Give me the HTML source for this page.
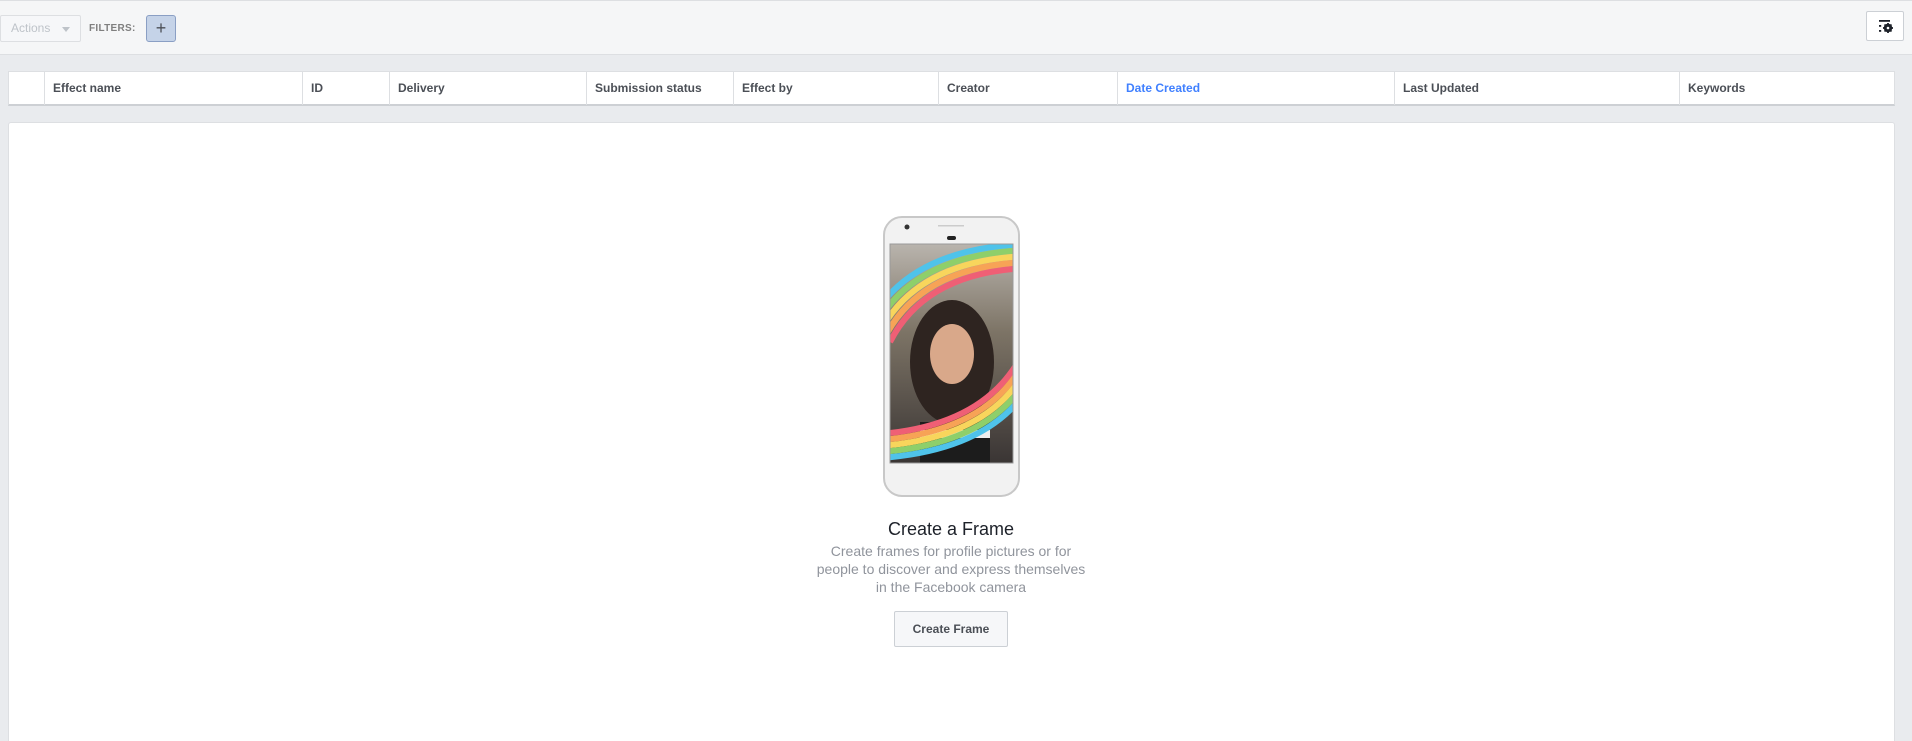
<!DOCTYPE html>
<html style="height:741px;overflow:hidden"><head><meta charset="utf-8"><style>
*{box-sizing:border-box;margin:0;padding:0}
body{width:1912px;height:741px;background:#e9ebee;font-family:"Liberation Sans",Helvetica,Arial,sans-serif;position:relative;overflow:hidden}
.top{position:absolute;left:0;top:0;width:1912px;height:55px;background:#f5f6f7;border-top:1px solid #dddfe2;border-bottom:1px solid #dddfe2}
.act{position:absolute;left:0;top:14px;width:81px;height:27px;border:1px solid #dddfe2;border-radius:2px;background:#f6f7f9;color:#bec3c9;font-size:12px;line-height:25px;padding-left:10px}
.act:after{content:"";position:absolute;left:61px;top:11px;border:4px solid transparent;border-top:5px solid #bec3c9}
.fl{position:absolute;left:89px;top:22px;font-size:10px;font-weight:bold;color:#7f7f7f;letter-spacing:.3px}
.plus{position:absolute;left:146px;top:14px;width:30px;height:27px;border:1px solid #8a9fc4;border-radius:3px;background:#c5d3e8;color:#4b4f56;font-size:18px;text-align:center;line-height:24px}
.set{position:absolute;left:1866px;top:10px;width:38px;height:30px;border:1px solid #ccd0d5;border-radius:2px;background:#fff}
.hdr{position:absolute;left:8px;top:71px;width:1887px;height:35px;background:#fff;border:1px solid #dddfe2;border-bottom:2px solid #cdd0d4}
.hdr div{position:absolute;top:0;height:33px;border-left:1px solid #dddfe2;font-size:12px;font-weight:bold;color:#4b4f56;line-height:33px;padding-left:8px}
.panel{position:absolute;left:8px;top:122px;width:1887px;height:625px;background:#fff;border:1px solid #dddfe2;border-radius:3px}
.t{position:absolute;left:0;width:1912px;text-align:center}
.btn{position:absolute;left:894px;top:611px;width:114px;height:36px;border:1px solid #ccd0d5;border-radius:2px;background:#f6f7f9;font-size:12px;font-weight:bold;color:#4b4f56;text-align:center;line-height:34px}
</style></head><body>
<div class="top">
<div class="act">Actions</div>
<div class="fl">FILTERS:</div>
<div class="plus">+</div>
<div class="set"><svg width="38" height="30" viewBox="0 0 38 30"><g fill="#1d2129"><rect x="12" y="8" width="11" height="1.8"/><rect x="12" y="13" width="2.2" height="1.8"/><rect x="12" y="18" width="2.2" height="1.8"/><circle cx="21" cy="16" r="3.2" fill="none" stroke="#1d2129" stroke-width="2"/><g stroke="#1d2129" stroke-width="1.8"><line x1="21" y1="11" x2="21" y2="21"/><line x1="16" y1="16" x2="26" y2="16"/><line x1="17.5" y1="12.5" x2="24.5" y2="19.5"/><line x1="24.5" y1="12.5" x2="17.5" y2="19.5"/></g><circle cx="21" cy="16" r="1.3" fill="#fff"/></g></svg></div>
</div>
<div class="hdr">
<div style="left:0;border-left:none;width:35px"></div>
<div style="left:35px">Effect name</div>
<div style="left:293px">ID</div>
<div style="left:380px">Delivery</div>
<div style="left:577px">Submission status</div>
<div style="left:724px">Effect by</div>
<div style="left:929px">Creator</div>
<div style="left:1108px;color:#4080ff">Date Created</div>
<div style="left:1385px">Last Updated</div>
<div style="left:1670px">Keywords</div>
</div>
<div class="panel"></div>
<svg style="position:absolute;left:880px;top:212px" width="145" height="288" viewBox="0 0 145 288">
<defs><clipPath id="c"><rect x="10" y="32" width="123" height="219"/></clipPath>
<linearGradient id="bg" x1="0" y1="0" x2="0" y2="1"><stop offset="0" stop-color="#b9b4ad"/><stop offset=".4" stop-color="#7d7466"/><stop offset="1" stop-color="#3a3534"/></linearGradient></defs>
<rect x="4" y="5" width="135" height="279" rx="18" fill="#f2f2f2" stroke="#c8c8c8" stroke-width="2"/>
<circle cx="27" cy="15" r="2.5" fill="#333"/>
<rect x="58" y="13" width="26" height="1.5" fill="#ccc"/>
<rect x="67" y="24" width="9" height="4" rx="2" fill="#222"/>
<g clip-path="url(#c)">
<rect x="10" y="32" width="123" height="219" fill="url(#bg)"/>
<ellipse cx="72" cy="150" rx="42" ry="62" fill="#2e2420"/>
<ellipse cx="72" cy="142" rx="22" ry="30" fill="#d9a88a"/>
<rect x="40" y="210" width="70" height="45" fill="#1c1c1c"/>
<rect x="40" y="218" width="70" height="8" fill="#eee"/>
<g fill="none" stroke-width="6">
<path d="M-10 110 Q30 35 150 32" stroke="#4fc3ea"/>
<path d="M-5 115 Q34 41 150 38" stroke="#8ecf6a"/>
<path d="M0 120 Q38 47 150 44" stroke="#f8d55c"/>
<path d="M5 125 Q42 53 150 50" stroke="#f7a356"/>
<path d="M10 130 Q46 59 150 56" stroke="#ef5f75"/>
<path d="M0 222 Q100 214 138 150" stroke="#ef5f75"/>
<path d="M0 228 Q104 220 142 154" stroke="#f7a356"/>
<path d="M0 234 Q108 226 146 158" stroke="#f8d55c"/>
<path d="M0 240 Q112 232 150 162" stroke="#8ecf6a"/>
<path d="M0 246 Q116 238 154 166" stroke="#4fc3ea"/>
</g></g>
<rect x="10" y="32" width="123" height="219" fill="none" stroke="#999" stroke-width="1"/>
</svg>
<div class="t" style="top:519px;font-size:18px;color:#1d2129;left:-5px">Create a Frame</div>
<div class="t" style="top:542px;font-size:14px;color:#90949c;line-height:18px;left:-5px">Create frames for profile pictures or for<br>people to discover and express themselves<br>in the Facebook camera</div>
<div class="btn">Create Frame</div>
</body></html>
